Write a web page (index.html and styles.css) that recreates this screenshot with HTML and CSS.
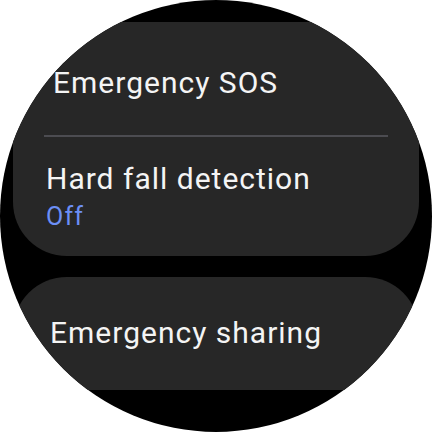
FILE: index.html
```html
<!DOCTYPE html>
<html lang="en">
<head>
    <meta charset="UTF-8">
    <meta name="viewport" content="width=device-width, initial-scale=1.0">
    <title>Safety and emergency</title>
    <link rel="stylesheet" href="styles.css">
</head>
<body>

    <div class="watch">
        <div class="list">
            <div class="card card-top">
                <div class="item item-sos">Emergency SOS</div>
                <div class="divider"></div>
                <div class="item item-fall">
                    <div class="title">Hard fall detection</div>
                    <div class="status">Off</div>
                </div>
            </div>

            <div class="card card-next">
                <div class="item item-sharing">Emergency sharing</div>
            </div>
        </div>
    </div>

</body>
</html>
```

FILE: styles.css
```css
body {
    margin: 0;
    padding: 0;
    background-color: #fff;
    font-family: 'Roboto', 'Noto Sans', sans-serif;
}

.watch {
    width: 432px;
    height: 432px;
    border-radius: 50%;
    background-color: #000;
    overflow: hidden;
    padding-top: 22px;
    box-sizing: border-box;
}

.list {
    height: 368px;
    overflow: hidden;
    display: flex;
    flex-direction: column;
    gap: 21px;
    padding: 0 13px;
}

.card {
    background-color: #272727;
    flex-shrink: 0;
}

.card-top {
    border-radius: 0 0 54px 54px;
}

.card-next {
    border-radius: 54px 54px 0 0;
    height: 140px;
}

.item {
    color: #f4f4f4;
    font-size: 30px;
    line-height: 34px;
    letter-spacing: 1px;
}

.item-sos {
    padding: 44px 0 35px 40px;
}

.divider {
    height: 2px;
    margin: 0 31px;
    background-color: #4c4c51;
}

.item-fall {
    padding: 25px 0 25px 33px;
}

.status {
    margin-top: 7px;
    font-size: 25px;
    line-height: 28px;
    letter-spacing: 1.2px;
    color: #6c8ff6;
}

.item-sharing {
    padding: 39px 0 0 37px;
}
```
